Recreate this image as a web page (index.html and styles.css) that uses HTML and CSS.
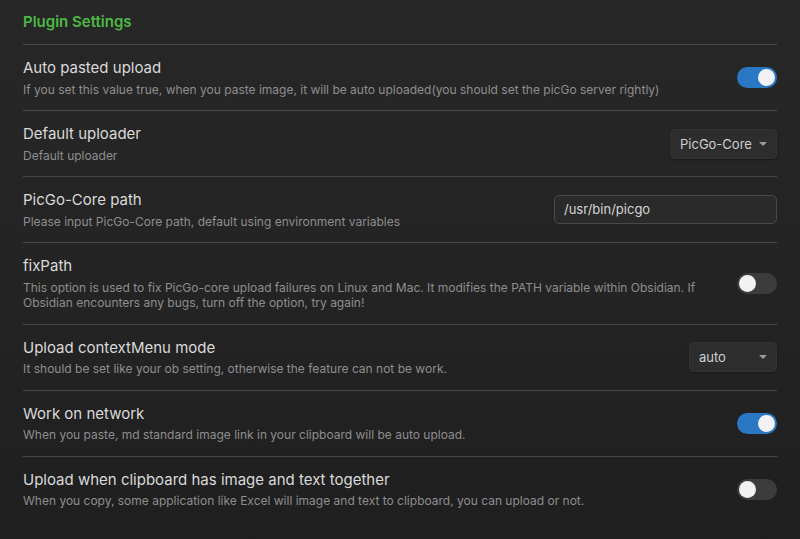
FILE: index.html
```html
<!DOCTYPE html>
<html lang="en">
<head>
  <meta charset="UTF-8">
  <title>Plugin Settings</title>
  <link rel="stylesheet" href="styles.css">
</head>
<body>
  <div class="settings">
    <h3 class="settings-title">Plugin Settings</h3>

    <div class="setting-item">
      <div class="setting-info">
        <div class="setting-name">Auto pasted upload</div>
        <div class="setting-desc">If you set this value true, when you paste image, it will be auto uploaded(you should set the picGo server rightly)</div>
      </div>
      <div class="setting-control"><div class="toggle on"></div></div>
    </div>

    <div class="setting-item">
      <div class="setting-info">
        <div class="setting-name">Default uploader</div>
        <div class="setting-desc">Default uploader</div>
      </div>
      <div class="setting-control">
        <div class="dropdown dropdown-uploader">PicGo-Core</div>
      </div>
    </div>

    <div class="setting-item">
      <div class="setting-info">
        <div class="setting-name">PicGo-Core path</div>
        <div class="setting-desc">Please input PicGo-Core path, default using environment variables</div>
      </div>
      <div class="setting-control">
        <div class="text-input">/usr/bin/picgo</div>
      </div>
    </div>

    <div class="setting-item">
      <div class="setting-info">
        <div class="setting-name">fixPath</div>
        <div class="setting-desc">This option is used to fix PicGo-core upload failures on Linux and Mac. It modifies the PATH variable within Obsidian. If Obsidian encounters any bugs, turn off the option, try again!</div>
      </div>
      <div class="setting-control"><div class="toggle"></div></div>
    </div>

    <div class="setting-item">
      <div class="setting-info">
        <div class="setting-name">Upload contextMenu mode</div>
        <div class="setting-desc">It should be set like your ob setting, otherwise the feature can not be work.</div>
      </div>
      <div class="setting-control">
        <div class="dropdown dropdown-mode">auto</div>
      </div>
    </div>

    <div class="setting-item">
      <div class="setting-info">
        <div class="setting-name">Work on network</div>
        <div class="setting-desc">When you paste, md standard image link in your clipboard will be auto upload.</div>
      </div>
      <div class="setting-control"><div class="toggle on"></div></div>
    </div>

    <div class="setting-item">
      <div class="setting-info">
        <div class="setting-name">Upload when clipboard has image and text together</div>
        <div class="setting-desc">When you copy, some application like Excel will image and text to clipboard, you can upload or not.</div>
      </div>
      <div class="setting-control"><div class="toggle"></div></div>
    </div>
  </div>
</body>
</html>
```

FILE: styles.css
```css
html, body {
  margin: 0;
  height: 100%;
}
body {
  font-family: Inter, "Noto Sans", sans-serif;
  background: linear-gradient(180deg, #272727 0%, #232323 60%, #1f1f1f 100%);
  color: #dadada;
  overflow: hidden;
}
.settings {
  padding: 0 23px;
}
.settings-title {
  margin: 0;
  padding: 12px 0;
  font-size: 15px;
  font-weight: 600;
  line-height: 20px;
  color: #4cb944;
}
.setting-item {
  display: flex;
  align-items: center;
  border-top: 1px solid #474747;
  padding: 13px 0;
}
.setting-info {
  flex: 1;
  margin-right: 22px;
}
.setting-name {
  font-size: 15px;
  line-height: 20px;
  color: #dadada;
}
.setting-desc {
  font-size: 12px;
  line-height: 15.5px;
  color: #8e8e8e;
  margin-top: 3.5px;
}
.setting-control {
  display: flex;
  justify-content: flex-end;
}
.toggle {
  position: relative;
  width: 40px;
  height: 21px;
  border-radius: 11px;
  background: #3c3c3c;
}
.toggle::after {
  content: "";
  position: absolute;
  top: 2px;
  left: 2px;
  width: 17px;
  height: 17px;
  border-radius: 50%;
  background: #f2f2f4;
}
.toggle.on {
  background: #2a77c4;
}
.toggle.on::after {
  left: 21px;
}
.dropdown {
  position: relative;
  box-sizing: border-box;
  height: 30px;
  padding: 0 10px;
  font-size: 13px;
  line-height: 30px;
  color: #cfcfcf;
  background: #2d2d2d;
  border-radius: 5px;
  box-shadow: 0 1px 2px rgba(0, 0, 0, 0.35), inset 0 0 0 1px #333;
}
.dropdown::after {
  content: "";
  position: absolute;
  right: 10px;
  top: 13px;
  border-left: 4px solid transparent;
  border-right: 4px solid transparent;
  border-top: 4px solid #9a9a9a;
}
.dropdown-uploader {
  width: 107px;
}
.dropdown-mode {
  width: 88px;
}
.text-input {
  box-sizing: border-box;
  width: 223px;
  height: 29px;
  padding: 0 9px;
  font-size: 13px;
  line-height: 27px;
  color: #d6d6d6;
  background: #2a2a2a;
  border: 1px solid #4a4a4a;
  border-radius: 5px;
}
```
